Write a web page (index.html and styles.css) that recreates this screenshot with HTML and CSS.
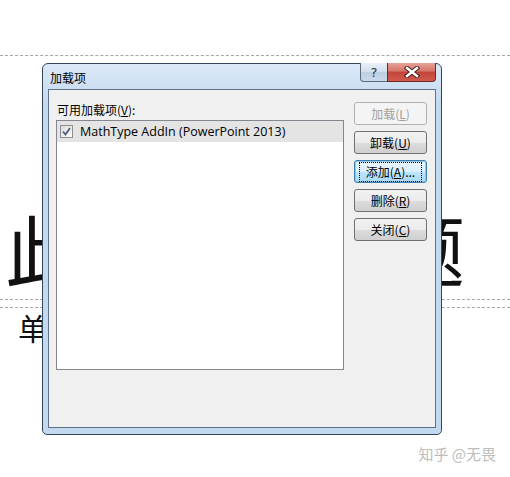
FILE: index.html
```html
<!DOCTYPE html>
<html lang="zh-CN">
<head>
  <meta charset="UTF-8" />
  <title>加载项</title>
  <link rel="stylesheet" href="styles.css">
</head>
<body>
  <div class="slide">
    <div class="title-box">
      <div class="slide-title"><span>此</span><span>题</span></div>
    </div>
    <div class="subtitle-box">
      <div class="slide-subtitle">单击此处添加副标题</div>
    </div>

    <div class="dialog">
      <div class="titlebar">
        <span class="caption">加载项</span>
        <div class="caption-buttons">
          <div class="cap-btn help">?</div>
          <div class="cap-btn close">
            <svg width="16" height="12" viewBox="0 0 16 12">
              <path d="M3 2 L13 10 M13 2 L3 10" stroke="#4a2020" stroke-width="4.4" stroke-linecap="square"/>
              <path d="M3 2 L13 10 M13 2 L3 10" stroke="#fff" stroke-width="2.4" stroke-linecap="square"/>
            </svg>
          </div>
        </div>
      </div>

      <div class="client">
        <div class="list-col">
          <div class="label">可用加载项(<u>V</u>):</div>
          <div class="listbox">
            <div class="list-row">
              <span class="checkbox">
                <svg width="9" height="9" viewBox="0 0 9 9">
                  <path d="M1 4.5 L3.5 7.5 L8 1" fill="none" stroke="#4c5e85" stroke-width="1.8"/>
                </svg>
              </span>
              <span class="row-text">MathType AddIn (PowerPoint 2013)</span>
            </div>
          </div>
        </div>
        <div class="btn-col">
          <div class="btn disabled"><span>加载(<u>L</u>)</span></div>
          <div class="btn"><span>卸载(<u>U</u>)</span></div>
          <div class="btn default"><span class="focus">添加(<u>A</u>)...</span></div>
          <div class="btn"><span>删除(<u>R</u>)</span></div>
          <div class="btn"><span>关闭(<u>C</u>)</span></div>
        </div>
      </div>
    </div>

    <div class="watermark">知乎 @无畏</div>
  </div>
</body>
</html>
```

FILE: styles.css
```css
body {
  margin: 0;
  background: #fff;
  font-family: "Noto Sans CJK SC", sans-serif;
}

.slide {
  position: relative;
  width: 510px;
  height: 477px;
  overflow: hidden;
  padding-top: 55px;
  box-sizing: border-box;
}

.title-box {
  height: 243px;
  border-top: 1px dashed #a6a6a6;
  border-bottom: 1px dashed #a6a6a6;
  display: flex;
  align-items: flex-end;
}

/* only the two ends of the slide title show past the dialog */
.slide-title {
  width: 460px;
  font-size: 77px;
  line-height: 77px;
  margin-left: 5px;
  margin-bottom: 13px;
  display: flex;
  justify-content: space-between;
  color: #111;
}

.subtitle-box {
  margin-top: 7px;
  border-top: 1px dashed #a6a6a6;
  padding-left: 18px;
}

.slide-subtitle {
  font-size: 30px;
  line-height: 36px;
  margin-top: 1px;
  color: #111;
}

.dialog {
  position: absolute;
  left: 42px;
  top: 63px;
  width: 400px;
  height: 372px;
  box-sizing: border-box;
  border: 1px solid #34465a;
  border-radius: 6px 6px 5px 5px;
  background: linear-gradient(#dce9f7, #c3d9f0 40px, #c3d9f0);
  padding: 0 5px 6px 5px;
  display: flex;
  flex-direction: column;
}

.titlebar {
  height: 25px;
  display: flex;
  justify-content: space-between;
  align-items: flex-start;
}

.caption {
  font-size: 12px;
  line-height: 16px;
  margin-top: 6px;
  margin-left: 2px;
  color: #000;
}

.caption-buttons {
  display: flex;
  margin-top: -1px;
}

.cap-btn {
  height: 18px;
  border: 1px solid #5b6b7d;
  border-top: none;
  display: flex;
  align-items: center;
  justify-content: center;
}

.help {
  width: 26px;
  border-radius: 0 0 0 4px;
  border-right: none;
  background: linear-gradient(#e9f0f8, #d2dfee 50%, #bccfe3 51%, #c9d9ea);
  font-family: "DejaVu Sans", sans-serif;
  font-size: 13px;
  color: #333;
}

.close {
  width: 47px;
  border-radius: 0 0 4px 0;
  border-color: #6b2a26;
  background: linear-gradient(#e8a299, #d47468 45%, #c24438 50%, #d15b4c);
}

.client {
  flex: 1;
  border: 1px solid #5f7185;
  background: #f0f0f0;
  display: flex;
  padding: 12px 0 0 7px;
  gap: 10px;
}

.label {
  font-size: 12px;
  line-height: 16px;
  margin-left: 1px;
  margin-bottom: 2px;
  color: #000;
}

.listbox {
  width: 288px;
  height: 250px;
  box-sizing: border-box;
  border: 1px solid #828790;
  background: #fff;
}

.list-row {
  height: 21px;
  background: #e4e4e4;
  display: flex;
  align-items: center;
  padding-left: 3px;
}

.checkbox {
  width: 11px;
  height: 11px;
  border: 1px solid #8e8f8f;
  background: linear-gradient(135deg, #dcdcdc, #fbfbfb);
  display: flex;
  align-items: center;
  justify-content: center;
  margin-right: 7px;
}

.row-text {
  font-family: "Open Sans", sans-serif;
  font-size: 12.5px;
  color: #000;
}

.btn-col {
  display: flex;
  flex-direction: column;
  gap: 6px;
}

.btn {
  width: 73px;
  height: 23px;
  box-sizing: border-box;
  border: 1px solid #707070;
  border-radius: 3px;
  background: linear-gradient(#f2f2f2, #ebebeb 50%, #dddddd 51%, #cfcfcf);
  font-size: 12px;
  line-height: 14px;
  display: flex;
  align-items: center;
  justify-content: center;
  color: #000;
}

.btn span {
  white-space: nowrap;
}

.btn u {
  display: inline-block;
}

.btn.disabled {
  border-color: #adb2b5;
  background: #f4f4f4;
  color: #a0a0a0;
}

.btn.default {
  border-color: #3c7fb1;
  box-shadow: inset 0 0 0 1px #93c9e3;
  background: linear-gradient(#eaf6fd, #d9f0fc 50%, #bee6fd 51%, #a7d9f5);
}

.focus {
  outline: 1px dotted #000;
  outline-offset: 2px;
  padding: 0 4px;
}

.watermark {
  position: absolute;
  right: 14px;
  bottom: 13px;
  font-size: 15px;
  color: #bdbdbd;
}
```
